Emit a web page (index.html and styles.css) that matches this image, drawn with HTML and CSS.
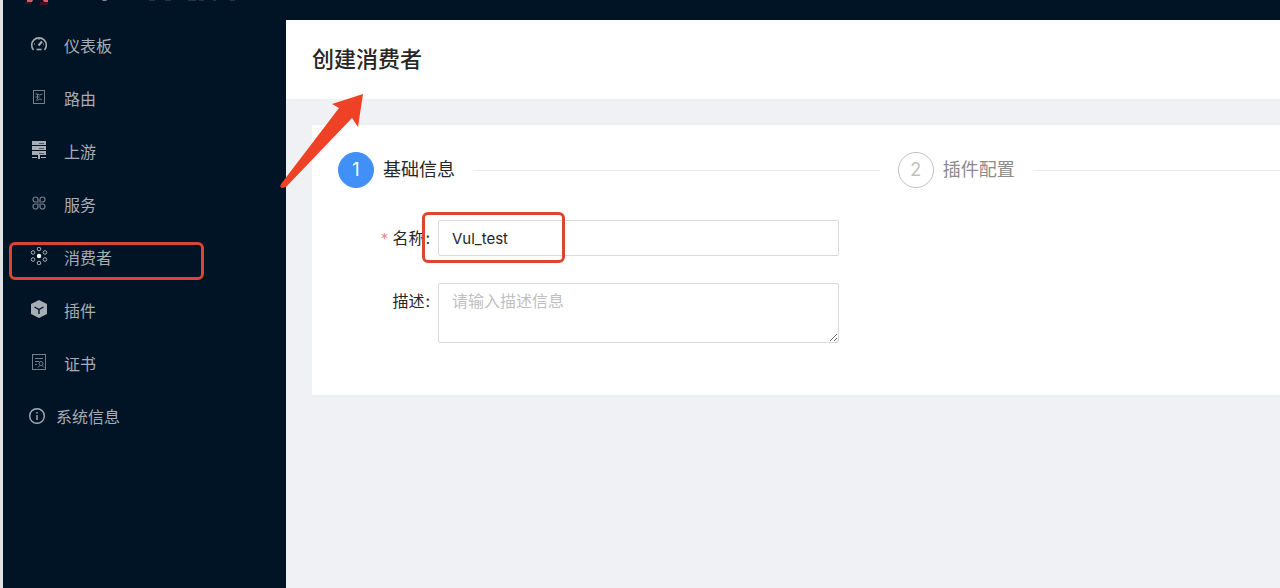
FILE: index.html
```html
<!DOCTYPE html>
<html lang="zh-CN">
<head>
    <meta charset="UTF-8">
    <meta name="viewport" content="width=device-width, initial-scale=1.0">
    <title>创建消费者</title>
    <link rel="stylesheet" href="styles.css">
</head>
<body>

<header class="top-bar">
    <svg class="logo" width="220" height="6" viewBox="0 0 220 6">
        <path d="M4 0h6l-1 2H4zM20 0h5v2h-4z" fill="#d4606c"/>
        <path d="M2 2h7l-1 2H1zM17 2h8v3h-8z" fill="#45101d"/>
        <path d="M79 0h5l-1 1h-3z" fill="#7f8b98"/>
        <path d="M126 0h6M142 0h6M165 0h8M176 0h5M190 0h3M207 0h5" stroke="#465463"/>
    </svg>
</header>

<div class="layout">
    <nav class="sidebar">
        <a href="#" class="menu-item">
            <svg class="icon" viewBox="0 0 18 18" fill="none" stroke="currentColor" stroke-width="1.6">
                <path d="M3.500 15A7.300 7.300 0 1 1 14.500 15"/>
                <path d="M6.500 14.500h5"/>
                <path d="M4 9h1M9 4v1M13 9h1" stroke-width="1"/>
                <path d="M8.500 10.500l3.500-4" stroke-width="2"/>
            </svg>
            仪表板
        </a>
        <a href="#" class="menu-item">
            <svg class="icon dim" viewBox="0 0 18 18" fill="none" stroke="currentColor">
                <rect x="3.5" y="2.5" width="11" height="13"/>
                <path d="M5.500 6h2l2 1 3-1M5.500 9h4M6 12h2l2-1 2 1M7.500 6v5"/>
            </svg>
            路由
        </a>
        <a href="#" class="menu-item">
            <svg class="icon" viewBox="0 0 18 18">
                <path d="M2 0h14v4H2zM2 5h14v4H2zM2 10h14v4H2zM2 16h5v1H2zM11 16h5v1h-5zM8 14h2v4H8z" fill="currentColor"/>
                <path d="M9 2.500h5M9 7.500h5M9 12.500h5" stroke="#4f5b68"/>
            </svg>
            上游
        </a>
        <a href="#" class="menu-item">
            <svg class="icon dim" viewBox="0 0 18 18" fill="none" stroke="currentColor" stroke-width="1.2">
                <path d="M8 8H5.500A2.500 2.500 0 1 1 8 5.500zM10 8V5.500A2.500 2.500 0 1 1 12.500 8zM8 10v2.500A2.500 2.500 0 1 1 5.500 10zM10 10h2.500A2.500 2.500 0 1 1 10 12.500z"/>
            </svg>
            服务
        </a>
        <a href="#" class="menu-item marked">
            <svg class="icon" viewBox="0 0 18 18" fill="none" stroke="currentColor">
                <circle cx="9" cy="2" r="1.800"/>
                <circle cx="9" cy="16" r="1.800"/>
                <circle cx="3" cy="5.500" r="1.800"/>
                <circle cx="15" cy="5.500" r="1.800"/>
                <circle cx="3" cy="12.500" r="1.800"/>
                <circle cx="15" cy="12.500" r="1.800"/>
                <circle cx="9" cy="9" r="2.200" fill="#fff" stroke="none"/>
            </svg>
            消费者
        </a>
        <a href="#" class="menu-item">
            <svg class="icon" viewBox="0 0 18 18">
                <path d="M9 0l8 4v10l-8 4-8-4V4z" fill="currentColor"/>
                <path d="M4.500 7L9 9.500 13.500 7M9 9.500V14" fill="none" stroke="#011426" stroke-width="1.400"/>
            </svg>
            插件
        </a>
        <a href="#" class="menu-item">
            <svg class="icon dim" viewBox="0 0 18 18" fill="none" stroke="currentColor">
                <rect x="2.500" y="1.500" width="13" height="15"/>
                <path d="M5 5.500h8M5 8.500h4M5 11.500h2M8 14.500l2-2M14 14.500l-2-2"/>
                <circle cx="11" cy="10.500" r="2"/>
            </svg>
            证书
        </a>
        <a href="#" class="menu-item plain">
            <svg class="icon" viewBox="0 0 18 18" fill="none" stroke="currentColor" stroke-width="1.400">
                <circle cx="9" cy="9" r="7.300"/>
                <path d="M9 8v5M9 5v1.500"/>
            </svg>
            系统信息
        </a>
    </nav>

    <main class="main">
        <div class="page-header">
            <h1>创建消费者</h1>
        </div>

        <section class="card">
            <ol class="steps">
                <li class="step active">
                    <span class="step-number">1</span>
                    <span class="step-title">基础信息</span>
                </li>
                <li class="step">
                    <span class="step-number">2</span>
                    <span class="step-title">插件配置</span>
                </li>
            </ol>

            <form class="form">
                <div class="form-row">
                    <label for="name"><span class="required">*</span>名称<span class="colon">:</span></label>
                    <div class="field marked">
                        <input type="text" id="name" value="Vul_test">
                    </div>
                </div>
                <div class="form-row">
                    <label for="desc">描述<span class="colon">:</span></label>
                    <div class="field">
                        <textarea id="desc" placeholder="请输入描述信息"></textarea>
                    </div>
                </div>
            </form>
        </section>

        <svg class="arrow" width="84" height="98" viewBox="0 0 84 98">
            <path d="M84 2L53 12l7 4L2 92q-2 4 2 4l3-1L73 26l6 9z" fill="#ef4125"/>
        </svg>
    </main>
</div>

</body>
</html>
```
FILE: styles.css
```css
*,
*::before,
*::after {
    margin: 0;
    padding: 0;
    box-sizing: border-box;
}

body {
    display: flex;
    flex-direction: column;
    min-height: 100vh;
    background: #f0f1f4;
    border-left: 3px solid #dfe2e5;
    font-family: Inter, "Noto Sans CJK SC", sans-serif;
    font-size: 16px;
    color: #262626;
}

.top-bar {
    height: 20px;
    padding-left: 20px;
    background: #011426;
}

.logo {
    display: block;
}

.layout {
    display: flex;
    flex: 1;
}

/* sidebar */
.sidebar {
    flex: none;
    width: 283px;
    background: #011426;
}

.menu-item {
    position: relative;
    display: flex;
    align-items: center;
    gap: 16px;
    height: 53px;
    padding: 0 0 3px 27px;
    color: #a6adb5;
    text-decoration: none;
}

.menu-item.plain {
    gap: 10px;
    padding-left: 25px;
}

.icon {
    flex: none;
    width: 18px;
    height: 18px;
    margin-bottom: 3px;
}

.plain .icon {
    margin-bottom: 0;
}

.icon.dim {
    color: #747f8b;
}

.menu-item.marked::after {
    content: "";
    position: absolute;
    left: 6px;
    top: 10px;
    width: 195px;
    height: 38px;
    border: 3px solid #dc452f;
    border-radius: 6px;
}

/* content */
.main {
    position: relative;
    flex: 1;
    min-width: 0;
}

.page-header {
    padding: 22px 26px;
    background: #fff;
}

h1 {
    font-size: 22px;
    font-weight: 500;
    line-height: 35px;
}

.card {
    margin: 26px 0 0 26px;
    padding: 27px 0 52px 26px;
    background: #fff;
}

.steps {
    display: flex;
    gap: 18px;
    list-style: none;
}

.step {
    display: flex;
    flex: 12;
    align-items: center;
    gap: 9px;
    color: #8c8c8c;
}

.step::after {
    content: "";
    flex: 1;
    height: 1px;
    margin-left: 9px;
    background: #ebebeb;
}

.step-number {
    width: 36px;
    height: 36px;
    border: 1px solid #bfbfbf;
    border-radius: 50%;
    font-size: 18px;
    line-height: 34px;
    text-align: center;
    color: #bfbfbf;
}

.step-title {
    font-size: 18px;
    line-height: 36px;
}

.step.active {
    flex: 17;
    color: #262626;
}

.active .step-number {
    background: #4090f7;
    border-color: #4090f7;
    color: #fff;
}

.form {
    display: grid;
    gap: 26px;
    margin-top: 32px;
}

.form-row {
    display: flex;
}

.form-row label {
    width: 92px;
    margin-right: 8px;
    line-height: 36px;
    text-align: right;
}

.required {
    margin-right: 4px;
    font-size: 15px;
    color: #f08a8c;
}

.colon {
    margin-left: 1px;
}

.field {
    position: relative;
    flex: 0 1 401px;
}

input,
textarea {
    display: block;
    width: 100%;
    padding: 0 13px;
    border: 1px solid #d9d9d9;
    border-radius: 2px;
    outline: none;
    background: #fff;
    color: #262626;
    font: inherit;
}

input {
    height: 36px;
    font-size: 15px;
}

textarea {
    height: 60px;
    padding-top: 5px;
    line-height: 24px;
    resize: vertical;
}

textarea::placeholder {
    color: #bfbfbf;
}

.field.marked::after {
    content: "";
    position: absolute;
    left: -16px;
    top: -8px;
    width: 143px;
    height: 51px;
    border: 3px solid #dc452f;
    border-radius: 6px;
}

.arrow {
    position: absolute;
    left: -7px;
    top: 72px;
}
```
